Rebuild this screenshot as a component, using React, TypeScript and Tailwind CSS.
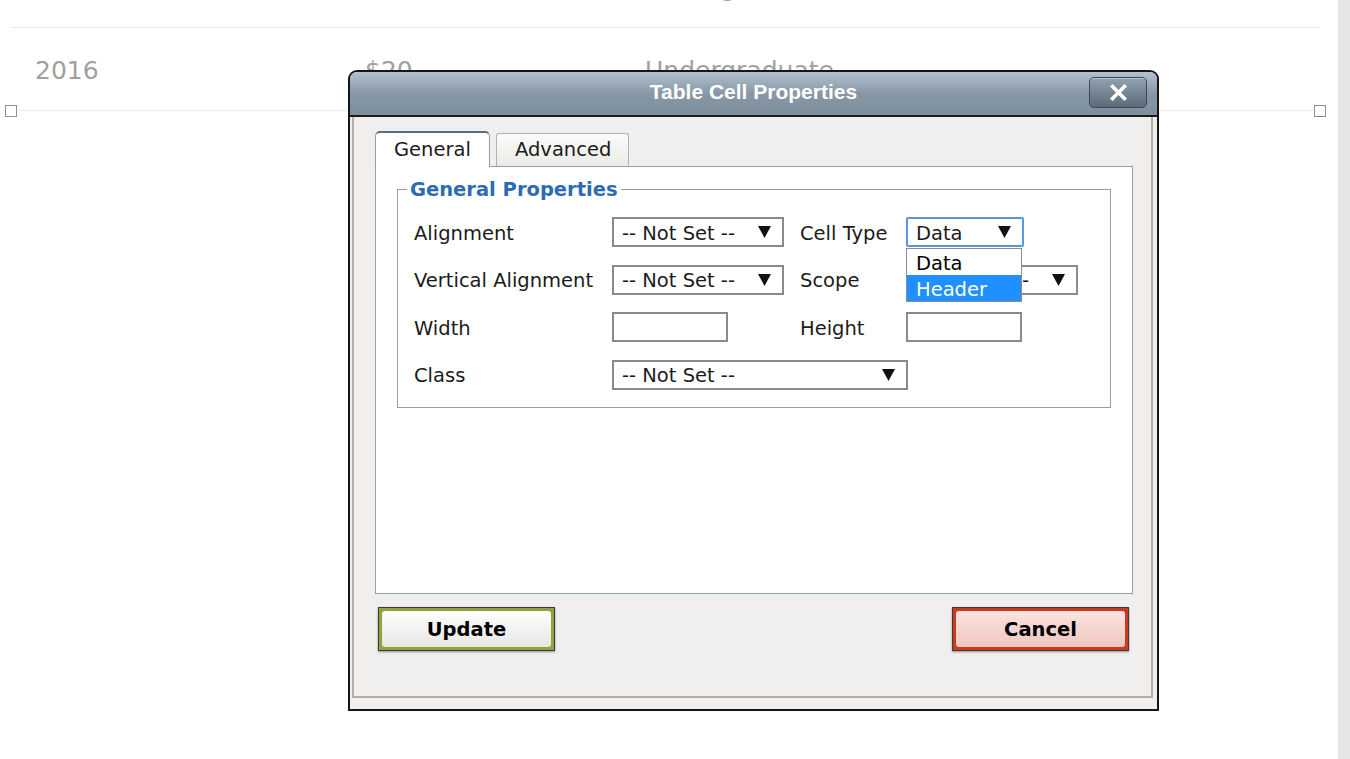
import React from 'react';

type SelectProps = {
  text: string;
  width: string;
  focused?: boolean;
};

const Arrow = () => (
  <svg width="13" height="12" viewBox="0 0 13 12" className="shrink-0">
    <polygon points="0,0 13,0 6.5,12" fill="#111" />
  </svg>
);

const FakeSelect = ({ text, width, focused = false }: SelectProps) => (
  <div
    className={`${width} h-[30px] flex items-center justify-between pl-[8px] pr-[11px] bg-white border-2 ${
      focused ? 'border-[#5b97dc] rounded-[2px]' : 'border-[#8a8a8a]'
    }`}
  >
    <span className="whitespace-nowrap pt-[3px]">{text}</span>
    <Arrow />
  </div>
);

const TextBox = () => <div className="w-[116px] h-[30px] bg-white border-2 border-[#8a8a8a]" />;

const Label = ({ children }: { children: React.ReactNode }) => <span className="pt-[3px]">{children}</span>;

const bgRows = [
  { year: '2015', price: '$40', level: 'Undergraduate' },
  { year: '2016', price: '$20', level: 'Undergraduate' },
];

const RowText = ({ year, price, level }: { year: string; price: string; level: string }) => (
  <div className="flex pl-[35px] pt-[30px] text-[25px] leading-[25px] text-[#a0a0a0]">
    <span className="w-[330px]">{year}</span>
    <span className="w-[280px]">{price}</span>
    <span>{level}</span>
  </div>
);

const Dialog = () => (
  <div className="absolute left-[348px] top-[70px] w-[811px] h-[641px] flex flex-col border-2 border-[#161616] rounded-t-[9px] overflow-hidden bg-[#f0efed] text-[19.5px] text-[#1b1b1b]">
    {/* title bar */}
    <div className="relative h-[45px] shrink-0 flex items-center justify-center pb-[4px] border-b-2 border-[#1c1c1c] bg-linear-to-b from-[#b4c2ce] via-[#8797a6] to-[#7d8e9d]">
      <span className="font-['Liberation_Sans',Arial,sans-serif] font-bold text-[21px] text-white">
        Table Cell Properties
      </span>
      <div className="absolute right-[10px] top-[5px] w-[58px] h-[31px] flex items-center justify-center rounded-[5px] border border-[#3c4955] bg-linear-to-b from-[#93a2af] to-[#5b6b79] shadow-[inset_0_1px_0_rgba(255,255,255,0.35)]">
        <svg width="17" height="17" viewBox="0 0 17 17">
          <path d="M2.5 2.5 L14.5 14.5 M14.5 2.5 L2.5 14.5" stroke="#fff" strokeWidth="3.6" strokeLinecap="square" />
        </svg>
      </div>
    </div>

    {/* body */}
    <div className="flex-1 pl-[2px] pr-[4px] pb-[11px]">
      <div className="h-full border-l-2 border-r-2 border-b-2 border-[#b7ada3] pl-[21px] pr-[18px] pt-[14px]">
        {/* tabs */}
        <div className="flex items-end gap-[6px] h-[35px]">
          <div className="relative z-10 -mb-px h-[36px] w-[115px] pl-[18px] flex items-center bg-white border border-b-0 border-[#8ea1b1] border-t-2 border-t-[#566c80] rounded-t-[5px]">
            General
          </div>
          <div className="h-[33px] w-[133px] pl-[18px] flex items-center border border-b-0 border-[#a7b6c3] rounded-t-[3px] bg-linear-to-b from-[#fbfbfa] to-[#ebebe7]">
            Advanced
          </div>
        </div>

        {/* tab panel */}
        <div className="h-[428px] bg-white border border-[#8fa2b2] pt-[11px]">
          <fieldset className="mx-[21px] border border-[#9c9c9c] pl-[16px] pr-[16px] pt-[16px] pb-[17px]">
            <legend className="-ml-[7px] px-[3px] font-bold text-[#2c6cb6] leading-[23px]">General Properties</legend>
            <div className="grid grid-cols-[198px_188px_106px_1fr] auto-rows-[30px] gap-y-[17.5px] items-center">
              <Label>Alignment</Label>
              <FakeSelect text="-- Not Set --" width="w-[172px]" />
              <Label>Cell Type</Label>
              <div className="relative z-20 w-[118px]">
                <FakeSelect text="Data" width="w-[118px]" focused />
                <div className="absolute left-0 top-[31px] w-[116px] bg-white border border-[#8c8c8c]">
                  <div className="h-[26px] pl-[9px] pt-[3px] flex items-center text-black">Data</div>
                  <div className="h-[26px] pl-[9px] pt-[3px] flex items-center bg-[#1e90ff] text-white">Header</div>
                </div>
              </div>

              <Label>Vertical Alignment</Label>
              <FakeSelect text="-- Not Set --" width="w-[172px]" />
              <Label>Scope</Label>
              <FakeSelect text="-- Not Set --" width="w-[172px]" />

              <Label>Width</Label>
              <TextBox />
              <Label>Height</Label>
              <TextBox />

              <Label>Class</Label>
              <div className="col-span-2">
                <FakeSelect text="-- Not Set --" width="w-[296px]" />
              </div>
            </div>
          </fieldset>
        </div>

        {/* buttons */}
        <div className="mt-[13px] flex justify-between pl-[3px] pr-[4px]">
          <div className="w-[177px] h-[44px] p-[3px] border border-[#3b3b3b] bg-[#8ea43c] shadow-[0_1px_2px_rgba(0,0,0,0.4)]">
            <div className="h-full pt-[2px] rounded-[3px] flex items-center justify-center font-bold text-black bg-linear-to-b from-[#ffffff] to-[#e6e6e4]">
              Update
            </div>
          </div>
          <div className="w-[177px] h-[44px] p-[3px] border border-[#3b3b3b] bg-[#c93a1f] shadow-[0_1px_2px_rgba(0,0,0,0.4)]">
            <div className="h-full pt-[2px] rounded-[3px] flex items-center justify-center font-bold text-black bg-linear-to-b from-[#fbe4e0] to-[#efc6c0]">
              Cancel
            </div>
          </div>
        </div>
      </div>
    </div>
  </div>
);

export default function App() {
  return (
    <div className="flex h-[759px] w-[1350px] overflow-hidden bg-white font-['DejaVu_Sans',Verdana,sans-serif]">
      <div className="relative flex-1">
        <div className="-mt-[55px]">
          <div className="h-[83px] flex flex-col">
            <RowText {...bgRows[0]} />
            <div className="mt-auto ml-[10px] w-[1310px] border-b border-[#ececec]" />
          </div>
          <div className="relative h-[83px] flex flex-col">
            <RowText {...bgRows[1]} />
            <div className="mt-auto ml-[18px] w-[1296px] border-b border-[#ececec]" />
            <div className="absolute left-[5px] bottom-[-6px] w-[12px] h-[12px] bg-white border border-[#8f8f8f]" />
            <div className="absolute left-[1314px] bottom-[-6px] w-[12px] h-[12px] bg-white border border-[#8f8f8f]" />
          </div>
        </div>
        <Dialog />
      </div>
      <div className="w-[12px] bg-[#e6e6e6]" />
    </div>
  );
}
